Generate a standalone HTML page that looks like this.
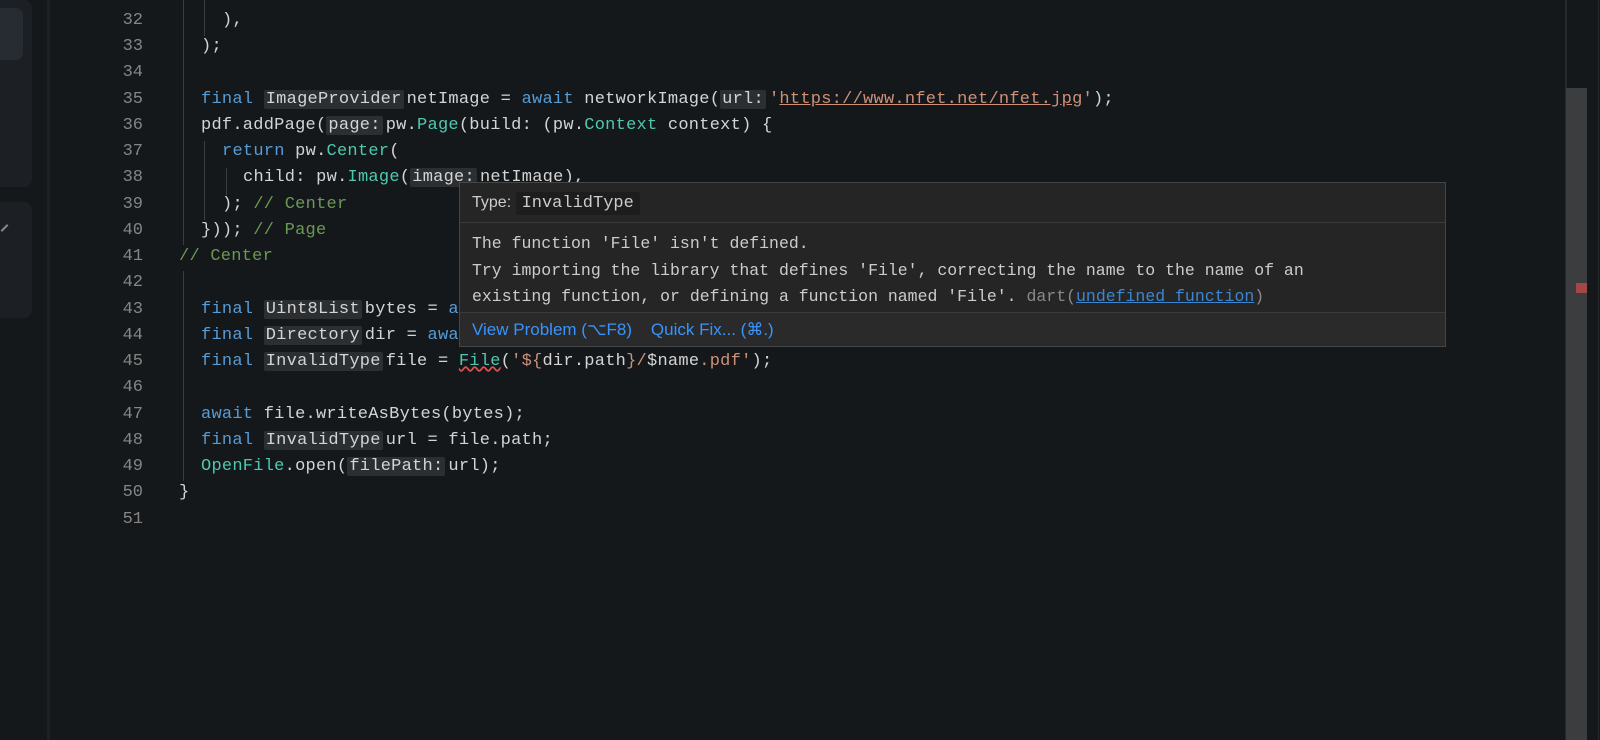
<!DOCTYPE html>
<html><head><meta charset="utf-8"><style>
body{margin:0;width:1600px;height:740px;background:#15181b;overflow:hidden;position:relative;font-family:"Liberation Mono",monospace;}
.ln{position:absolute;left:90px;width:53px;text-align:right;color:#858585;font-size:17px;}
.c{position:absolute;white-space:pre;color:#d4d4d4;font-size:17px;letter-spacing:0.25px;}
.k{color:#569cd6}.t{color:#4ec9b0}.s{color:#ce9178}.cm{color:#6a9955}
.h{background:#2c2f32;padding:0 2px;margin-right:3px;border-radius:2px}
.g{position:absolute;width:1px;background:#3a3d40}
.hov{position:absolute;left:459px;top:182px;width:985px;height:163px;background:#252526;border:1px solid #454545;font-family:"Liberation Mono",monospace;font-size:16px;color:#cccccc}
.ln,.c{margin-top:3px}
</style></head><body>
<div style="position:absolute;left:0;top:0;width:32px;height:187px;background:#1c2024;border-radius:0 8px 8px 0"></div>
<div style="position:absolute;left:0;top:8px;width:23px;height:52px;background:#272c33;border-radius:0 7px 7px 0"></div>
<div style="position:absolute;left:0;top:202px;width:32px;height:116px;background:#1c2024;border-radius:0 8px 8px 0"></div>
<div style="position:absolute;left:0;top:227px;width:9px;height:2px;background:#8a8d90;transform:rotate(-45deg)"></div>
<div style="position:absolute;left:47px;top:0;width:3px;height:740px;background:#1d2024"></div>
<div style="position:absolute;left:1565px;top:0;width:2px;height:740px;background:#26292c"></div>
<div style="position:absolute;left:1566px;top:88px;width:21px;height:652px;background:#3c3d3f"></div>
<div style="position:absolute;left:1576px;top:283px;width:11px;height:10px;background:#a34646"></div>
<div style="position:absolute;left:1598px;top:0;width:1px;height:740px;background:#26292c"></div>

<div class="g" style="left:183px;top:0;height:245px"></div>
<div class="g" style="left:183px;top:271px;height:210px"></div>
<div class="g" style="left:204px;top:0;height:36px"></div>
<div class="g" style="left:204px;top:141px;height:79px"></div>
<div class="g" style="left:226px;top:168px;height:27px"></div>

<div class="ln" style="top:8px">32</div><div class="c" style="left:222px;top:8px">),</div>
<div class="ln" style="top:34px">33</div><div class="c" style="left:201px;top:34px">);</div>
<div class="ln" style="top:60px">34</div>
<div class="ln" style="top:87px">35</div><div class="c" style="left:201px;top:87px"><span class="k">final</span> <span class="h">ImageProvider</span>netImage = <span class="k">await</span> networkImage(<span class="h">url:</span><span class="s">'<u>https://www.nfet.net/nfet.jpg</u>'</span>);</div>
<div class="ln" style="top:113px">36</div><div class="c" style="left:201px;top:113px">pdf.addPage(<span class="h">page:</span>pw.<span class="t">Page</span>(build: (pw.<span class="t">Context</span> context) {</div>
<div class="ln" style="top:139px">37</div><div class="c" style="left:222px;top:139px"><span class="k">return</span> pw.<span class="t">Center</span>(</div>
<div class="ln" style="top:165px">38</div><div class="c" style="left:243px;top:165px">child: pw.<span class="t">Image</span>(<span class="h">image:</span>netImage),</div>
<div class="ln" style="top:192px">39</div><div class="c" style="left:222px;top:192px">); <span class="cm">// Center</span></div>
<div class="ln" style="top:218px">40</div><div class="c" style="left:201px;top:218px">})); <span class="cm">// Page</span></div>
<div class="ln" style="top:244px">41</div><div class="c" style="left:179px;top:244px"><span class="cm">// Center</span></div>
<div class="ln" style="top:270px">42</div>
<div class="ln" style="top:297px">43</div><div class="c" style="left:201px;top:297px"><span class="k">final</span> <span class="h">Uint8List</span>bytes = <span class="k">a</span></div>
<div class="ln" style="top:323px">44</div><div class="c" style="left:201px;top:323px"><span class="k">final</span> <span class="h">Directory</span>dir = <span class="k">awa</span></div>
<div class="ln" style="top:349px">45</div><div class="c" style="left:201px;top:349px"><span class="k">final</span> <span class="h">InvalidType</span>file = <span class="t" style="text-decoration:underline wavy #e05252">File</span>(<span class="s">'${</span>dir.path<span class="s">}/</span>$name<span class="s">.pdf'</span>);</div>
<div class="ln" style="top:375px">46</div>
<div class="ln" style="top:402px">47</div><div class="c" style="left:201px;top:402px"><span class="k">await</span> file.writeAsBytes(bytes);</div>
<div class="ln" style="top:428px">48</div><div class="c" style="left:201px;top:428px"><span class="k">final</span> <span class="h">InvalidType</span>url = file.path;</div>
<div class="ln" style="top:454px">49</div><div class="c" style="left:201px;top:454px"><span class="t">OpenFile</span>.open(<span class="h">filePath:</span>url);</div>
<div class="ln" style="top:480px">50</div><div class="c" style="left:179px;top:480px">}</div>
<div class="ln" style="top:507px">51</div>

<div class="hov">
 <div style="height:39px;border-bottom:1px solid #3a3a3a;padding-left:12px;line-height:39px;font-family:'Liberation Sans',sans-serif;font-size:16px">Type: <span style="background:#1d1d1d;padding:2px 6px;border-radius:3px;font-family:'Liberation Mono',monospace;font-size:17px">InvalidType</span></div>
 <div style="height:89px;padding:8px 12px 0;line-height:26.5px;white-space:pre;font-size:16.5px">The function 'File' isn't defined.
Try importing the library that defines 'File', correcting the name to the name of an
existing function, or defining a function named 'File'. <span style="color:#8a8a8a">dart(<u style="color:#3c86d0">undefined_function</u>)</span></div>
 <div style="position:absolute;left:0;right:0;bottom:0;height:33px;border-top:1px solid #3a3a3a;background:#2a2a2b;line-height:34px;padding-left:12px;color:#3794ff;font-family:'Liberation Sans',sans-serif;font-size:17px">View Problem (⌥F8)&nbsp;&nbsp;&nbsp;&nbsp;Quick Fix... (⌘.)</div>
</div>
</body></html>
